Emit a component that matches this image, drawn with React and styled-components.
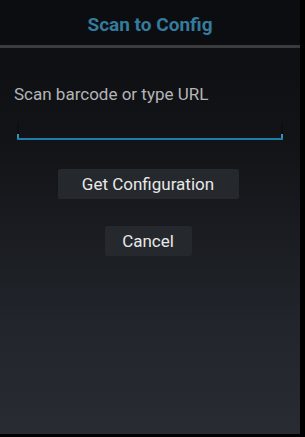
import styled, { createGlobalStyle } from "styled-components";

const GlobalStyle = createGlobalStyle`
  html, body {
    margin: 0;
    padding: 0;
    background: #000;
  }
  body {
    font-family: Roboto, "Noto Sans", sans-serif;
  }
`;

const Screen = styled.div`
  width: 300px;
  height: 434px;
  display: flex;
  flex-direction: column;
  background: linear-gradient(to bottom, #0c0d10 0%, #121418 35%, #22252b 75%, #282c32 100%);
`;

const Header = styled.header`
  height: 45px;
  display: flex;
  align-items: center;
  justify-content: center;
  background: #0c0d10;
  border-bottom: 3px solid #3a3b3d;
`;

const Title = styled.h1`
  margin: 3px 0 0;
  font-size: 19px;
  font-weight: 700;
  color: #347b9d;
`;

const Body = styled.main`
  display: flex;
  flex-direction: column;
  padding: 35px 17px 0 14px;
`;

const Label = styled.div`
  font-size: 17px;
  color: #b4b5b7;
  line-height: 22px;
`;

const Field = styled.div`
  margin: 18px 0 0 3px;
  height: 15px;
  border: 2px solid #1f7ea9;
  border-top: none;
  position: relative;
  width: 262px;
  &::before,
  &::after {
    content: "";
    position: absolute;
    top: 0;
    height: 11px;
    width: 2px;
    background: #0e0f12;
  }
  &::before { left: -2px; }
  &::after { right: -2px; }
`;

const Edge = styled.span`
  position: absolute;
  bottom: 0;
  width: 2px;
  height: 4px;
  background: ${(p) => p.$color};
  ${(p) => (p.$side === "left" ? "left: -2px;" : "right: -2px;")}
`;

const Buttons = styled.div`
  display: flex;
  flex-direction: column;
  align-items: center;
  gap: 27px;
  margin-top: 29px;
`;

const Button = styled.button`
  width: ${(p) => p.$width}px;
  height: 30px;
  border: none;
  border-radius: 2px;
  background: #25282d;
  color: #e8e8e8;
  font-family: Roboto, "Noto Sans", sans-serif;
  font-size: 17px;
  padding: 0;
  margin-left: ${(p) => p.$shift || 0}px;
`;

export default function App() {
  return (
    <>
      <GlobalStyle />
      <Screen>
        <Header>
          <Title>Scan to Config</Title>
        </Header>
        <Body>
          <Label>Scan barcode or type URL</Label>
          <Field>
            <Edge $side="left" $color="#3a8fb5" />
            <Edge $side="right" $color="#3a8fb5" />
          </Field>
          <Buttons>
            <Button $width={181} $shift={-1}>Get Configuration</Button>
            <Button $width={87} $shift={-1}>Cancel</Button>
          </Buttons>
        </Body>
      </Screen>
    </>
  );
}
